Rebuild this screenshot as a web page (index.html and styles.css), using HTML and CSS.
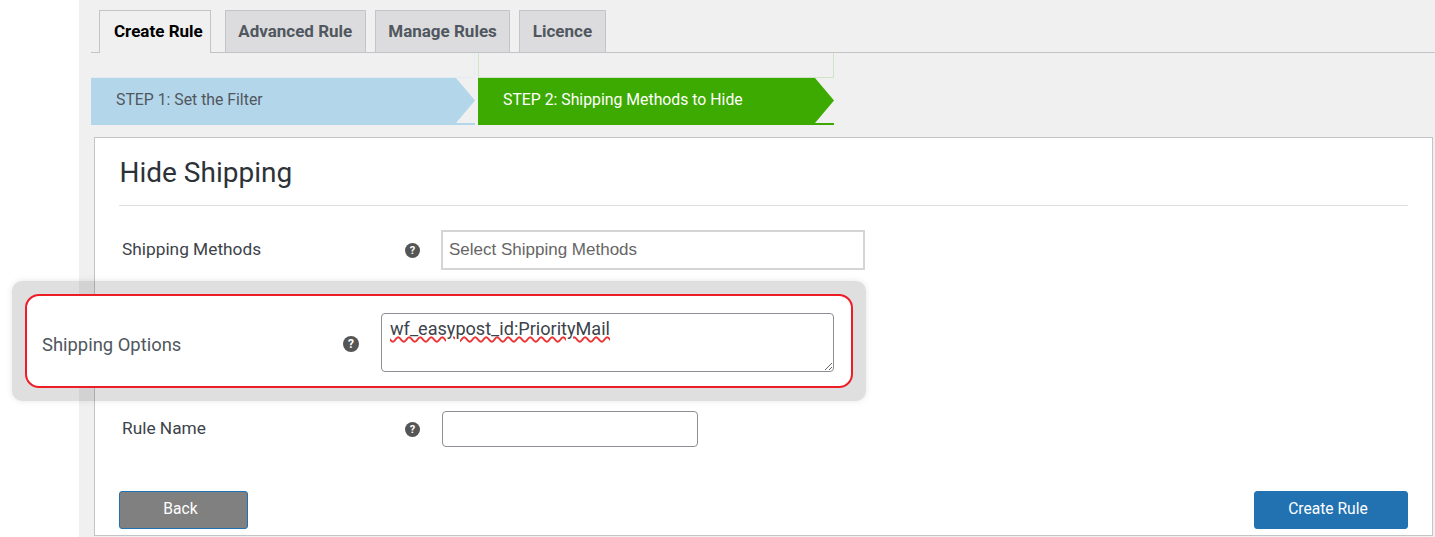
FILE: index.html
```html
<!DOCTYPE html>
<html lang="en">
<head>
    <meta charset="UTF-8">
    <meta name="viewport" content="width=device-width, initial-scale=1.0">
    <title>Hide Shipping</title>
    <link rel="stylesheet" href="styles.css">
</head>
<body>
    <div class="sidebar"></div>
    <div class="main">
        <div class="tabs">
            <a class="tab active">Create Rule</a>
            <a class="tab">Advanced Rule</a>
            <a class="tab">Manage Rules</a>
            <a class="tab">Licence</a>
        </div>

        <div class="steps">
            <div class="step step-one">
                <div class="step-top"></div>
                <div class="step-body">STEP 1: Set the Filter</div>
            </div>
            <div class="step step-two">
                <div class="step-top"></div>
                <div class="step-body">STEP 2: Shipping Methods to Hide</div>
            </div>
        </div>

        <div class="panel">
            <h2 class="panel-title">Hide Shipping</h2>

            <div class="row">
                <label class="row-label">Shipping Methods</label>
                <span class="help">?</span>
                <div class="select-box">Select Shipping Methods</div>
            </div>

            <div class="row-callout">
                <div class="callout-frame">
                    <div class="callout">
                        <label class="callout-label">Shipping Options</label>
                        <span class="help help-big">?</span>
                        <textarea class="callout-input" spellcheck="false">wf_easypost_id:PriorityMail</textarea>
                    </div>
                </div>
            </div>

            <div class="row">
                <label class="row-label row-label-name">Rule Name</label>
                <span class="help">?</span>
                <input class="name-input" type="text">
            </div>

            <div class="actions">
                <button class="btn btn-back">Back</button>
                <button class="btn btn-create">Create Rule</button>
            </div>
        </div>
    </div>
</body>
</html>
```

FILE: styles.css
```css
body {
    font-family: Roboto, 'Liberation Sans', sans-serif;
    background-color: #fff;
    color: #3c434a;
    display: flex;
    height: 537px;
    margin: 0;
    overflow: hidden;
}

.sidebar {
    width: 79px;
    flex-shrink: 0;
}

.main {
    flex: 1;
    height: 537px;
    padding: 10px 0 0 12px;
    box-sizing: border-box;
    background-color: #f0f0f1;
}

/* tabs */
.tabs {
    display: flex;
    gap: 9px;
    height: 42px;
    padding-left: 8px;
    border-bottom: 1px solid #c3c4c7;
}

.tab {
    height: 42px;
    box-sizing: border-box;
    padding: 0 12.5px;
    border: 1px solid #c3c4c7;
    border-bottom: none;
    background-color: #dcdcde;
    color: #50575e;
    font-size: 17px;
    font-weight: 700;
    line-height: 41px;
}

.tab.active {
    padding: 0 7px 0 14px;
    margin-right: 5px;
    background-color: #f0f0f1;
    color: #000;
    height: 43px;
}

/* steps */
.steps {
    display: flex;
    gap: 3px;
}

.step {
    height: 72px;
    box-sizing: border-box;
    border-bottom: 2px solid;
}

.step-top {
    height: 25px;
    box-sizing: border-box;
    border-bottom: 1px solid;
    border-right: 1px solid;
}

.step-body {
    height: 45px;
    display: flex;
    align-items: center;
    padding: 0 0 2px 25px;
    box-sizing: border-box;
    font-size: 15.8px;
    clip-path: polygon(0 0, calc(100% - 19px) 0, 100% 50%, calc(100% - 19px) 100%, 0 100%);
}

.step-one {
    width: 384px;
    border-color: #b4d6ea;
}

.step-one .step-top {
    border-color: #e2edf3;
}

.step-one .step-body {
    background-color: #b4d6ea;
    color: #50575e;
}

.step-two {
    width: 356px;
    border-color: #3caa00;
}

.step-two .step-top {
    border-color: #cfe3c5;
    border-left: 1px solid #cfe3c5;
}

.step-two .step-body {
    background-color: #3caa00;
    color: #fff;
}

/* panel */
.panel {
    margin: 12px 2px 0 3px;
    height: 399px;
    box-sizing: border-box;
    padding: 18px 24px 0 24px;
    border: 1px solid #c3c4c7;
    background-color: #fff;
}

.panel-title {
    margin: 0 0 24px;
    padding: 0 0 15px 0.5px;
    border-bottom: 1px solid #ddd;
    font-size: 28px;
    font-weight: 400;
    line-height: 34px;
    color: #2c3338;
}

.row {
    display: grid;
    grid-template-columns: 261px 16px 1fr;
    column-gap: 21px;
    align-items: center;
    padding-left: 3px;
}

.row-label {
    font-size: 17.3px;
    padding-bottom: 2px;
}

.row-label-name {
    padding-bottom: 3px;
}

.help {
    width: 15px;
    height: 15px;
    margin-left: 1px;
    border-radius: 50%;
    background-color: #555;
    color: #fff;
    font-size: 11px;
    font-weight: 700;
    line-height: 15px;
    text-align: center;
}

.help-big {
    width: 16px;
    height: 16px;
    margin: 3px 0 0;
    line-height: 16px;
    font-size: 12px;
}

.select-box {
    width: 424px;
    height: 40px;
    box-sizing: border-box;
    border: 2px solid #d5d5d5;
    padding-left: 6px;
    font-family: 'Liberation Sans', sans-serif;
    font-size: 17px;
    line-height: 35px;
    color: #666;
}

.name-input {
    width: 256px;
    height: 36px;
    box-sizing: border-box;
    margin-left: 1px;
    border: 1px solid #8c8f94;
    border-radius: 4px;
    background-color: #fff;
}

/* the zoomed row that sits on top of the form */
.row-callout {
    position: relative;
    height: 141px;
}

.callout-frame {
    position: absolute;
    left: -107px;
    top: 11px;
    padding: 13px;
    border-radius: 10px;
    background-color: rgba(0, 0, 0, 0.125);
    box-shadow: 0 0 6px rgba(0, 0, 0, 0.1);
}

.callout {
    width: 828px;
    height: 94px;
    box-sizing: border-box;
    display: grid;
    grid-template-columns: 279px 16px 1fr;
    column-gap: 22px;
    align-items: center;
    padding: 3px 17px 0 15px;
    border: 2px solid #ee1c25;
    border-radius: 14px;
    background-color: #fff;
}

.callout-label {
    margin-top: 3px;
    font-size: 18.4px;
    color: #50575e;
}

.callout-input {
    height: 59px;
    box-sizing: border-box;
    padding: 4px 8px;
    border: 1.5px solid #8c8f94;
    border-radius: 4px;
    font-family: Roboto, sans-serif;
    font-size: 18.1px;
    color: #3c434a;
    text-decoration: underline wavy #ee3333;
    text-decoration-thickness: 1.5px;
    outline: none;
}

/* buttons */
.actions {
    display: flex;
    justify-content: space-between;
    margin-top: 44px;
}

.btn {
    height: 38px;
    padding: 0 6px 3px 0;
    border-radius: 3px;
    border: 1px solid #2271b1;
    color: #fff;
    font-family: Roboto, sans-serif;
    font-size: 15.6px;
}

.btn-back {
    width: 129px;
    background-color: #808080;
}

.btn-create {
    width: 154px;
    background-color: #2271b1;
}
```
